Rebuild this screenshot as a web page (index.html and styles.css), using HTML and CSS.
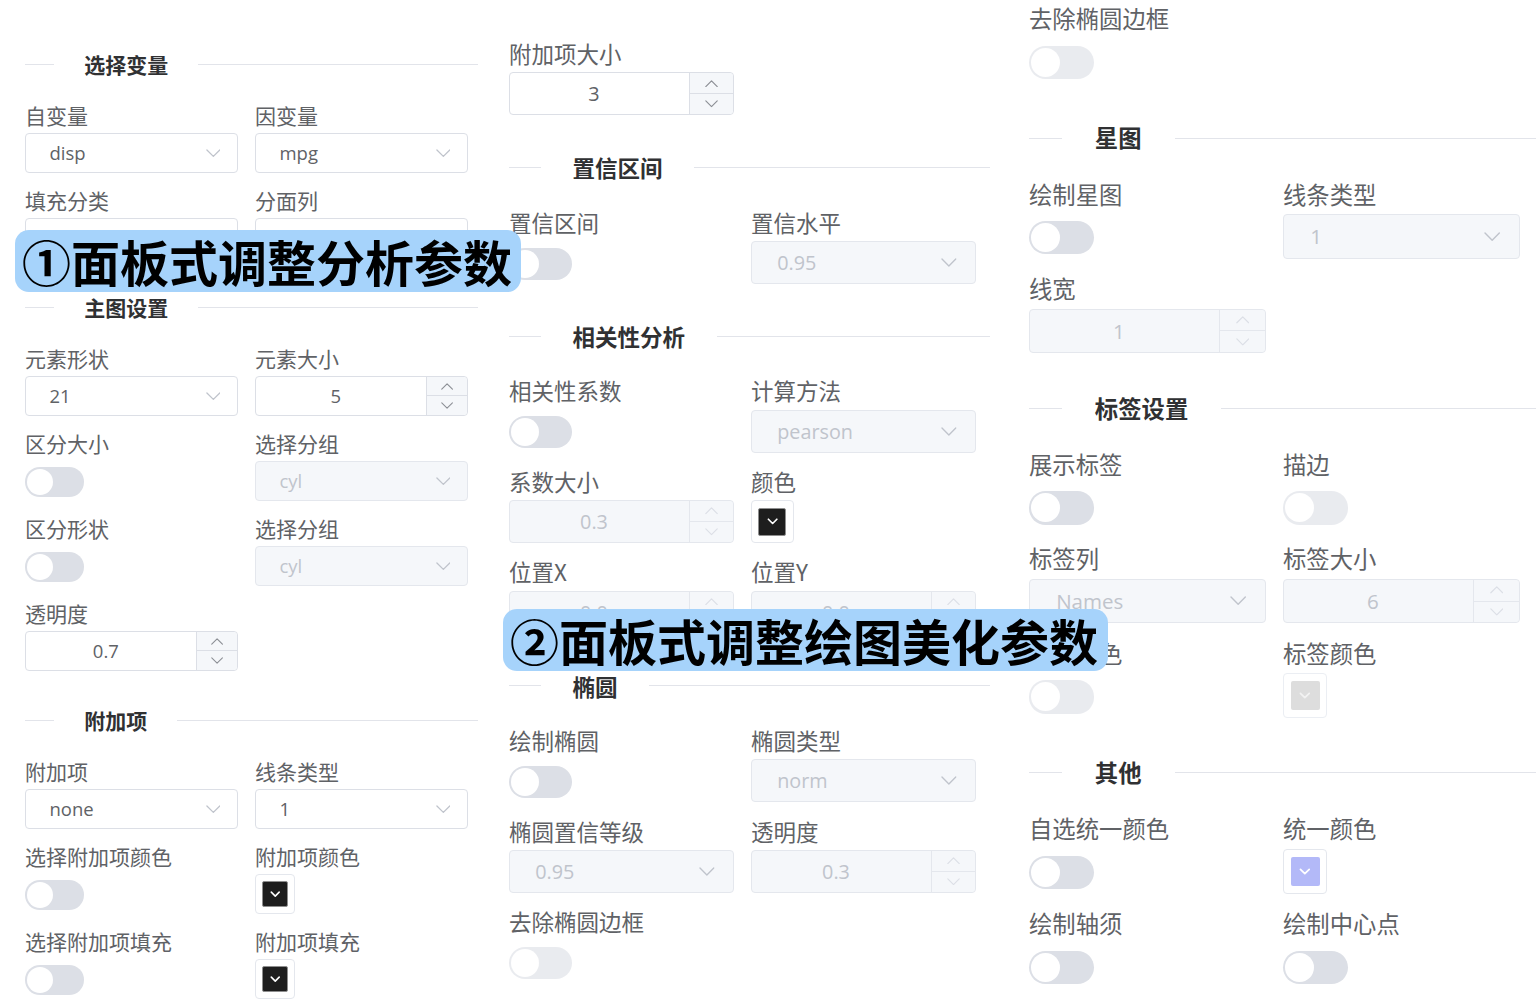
FILE: index.html
```html
<!DOCTYPE html>
<html lang="zh-CN">
<head>
<meta charset="utf-8">
<title>面板</title>
<link rel="stylesheet" href="styles.css">
</head>
<body>
<svg class="defs" width="0" height="0" aria-hidden="true">
  <symbol id="chev" viewBox="0 0 16 9"><path d="M1 1 L8 8 L15 1" fill="none" stroke="currentColor" stroke-width="1.4" stroke-linecap="round" stroke-linejoin="round"/></symbol>
  <symbol id="chevup" viewBox="0 0 16 9"><path d="M1 8 L8 1 L15 8" fill="none" stroke="currentColor" stroke-width="1.5" stroke-linecap="round" stroke-linejoin="round"/></symbol>
  <symbol id="chevb" viewBox="0 0 16 9"><path d="M2 1.5 L8 7.5 L14 1.5" fill="none" stroke="currentColor" stroke-width="2.4" stroke-linecap="round" stroke-linejoin="round"/></symbol>
</svg>

<div class="page">

  <!-- Column 1 -->
  <div class="col c1">
    <div class="divider"><span class="ln l"></span><span class="tt">选择变量</span><span class="ln r"></span></div>
    <div class="row">
      <div class="item"><div class="lbl">自变量</div><div class="ctl"><div class="sel"><span class="val">disp</span><svg class="arr"><use href="#chev"/></svg></div></div></div>
      <div class="item"><div class="lbl">因变量</div><div class="ctl"><div class="sel"><span class="val">mpg</span><svg class="arr"><use href="#chev"/></svg></div></div></div>
    </div>
    <div class="row">
      <div class="item"><div class="lbl">填充分类</div><div class="ctl"><div class="sel"><span class="val"></span><svg class="arr"><use href="#chev"/></svg></div></div></div>
      <div class="item"><div class="lbl">分面列</div><div class="ctl"><div class="sel"><span class="val"></span><svg class="arr"><use href="#chev"/></svg></div></div></div>
    </div>
    <div class="divider"><span class="ln l"></span><span class="tt">主图设置</span><span class="ln r"></span></div>
    <div class="row">
      <div class="item"><div class="lbl">元素形状</div><div class="ctl"><div class="sel"><span class="val">21</span><svg class="arr"><use href="#chev"/></svg></div></div></div>
      <div class="item"><div class="lbl">元素大小</div><div class="ctl"><div class="num"><span class="in val">5</span><span class="sp"><span><svg><use href="#chevup"/></svg></span><span><svg><use href="#chev"/></svg></span></span></div></div></div>
    </div>
    <div class="row">
      <div class="item"><div class="lbl">区分大小</div><div class="ctl"><div class="sw"></div></div></div>
      <div class="item"><div class="lbl">选择分组</div><div class="ctl"><div class="sel dis"><span class="val">cyl</span><svg class="arr"><use href="#chev"/></svg></div></div></div>
    </div>
    <div class="row">
      <div class="item"><div class="lbl">区分形状</div><div class="ctl"><div class="sw"></div></div></div>
      <div class="item"><div class="lbl">选择分组</div><div class="ctl"><div class="sel dis"><span class="val">cyl</span><svg class="arr"><use href="#chev"/></svg></div></div></div>
    </div>
    <div class="row">
      <div class="item"><div class="lbl">透明度</div><div class="ctl"><div class="num"><span class="in val">0.7</span><span class="sp"><span><svg><use href="#chevup"/></svg></span><span><svg><use href="#chev"/></svg></span></span></div></div></div>
    </div>
    <div class="divider"><span class="ln l"></span><span class="tt">附加项</span><span class="ln r"></span></div>
    <div class="row">
      <div class="item"><div class="lbl">附加项</div><div class="ctl"><div class="sel"><span class="val">none</span><svg class="arr"><use href="#chev"/></svg></div></div></div>
      <div class="item"><div class="lbl">线条类型</div><div class="ctl"><div class="sel"><span class="val">1</span><svg class="arr"><use href="#chev"/></svg></div></div></div>
    </div>
    <div class="row">
      <div class="item"><div class="lbl">选择附加项颜色</div><div class="ctl"><div class="sw"></div></div></div>
      <div class="item"><div class="lbl">附加项颜色</div><div class="ctl"><div class="cp"><span class="cc dark"><svg><use href="#chevb"/></svg></span></div></div></div>
    </div>
    <div class="row">
      <div class="item"><div class="lbl">选择附加项填充</div><div class="ctl"><div class="sw"></div></div></div>
      <div class="item"><div class="lbl">附加项填充</div><div class="ctl"><div class="cp"><span class="cc dark"><svg><use href="#chevb"/></svg></span></div></div></div>
    </div>
  </div>

  <!-- Column 2 -->
  <div class="col c2">
    <div class="row">
      <div class="item"><div class="lbl">附加项大小</div><div class="ctl"><div class="num"><span class="in val">3</span><span class="sp"><span><svg><use href="#chevup"/></svg></span><span><svg><use href="#chev"/></svg></span></span></div></div></div>
    </div>
    <div class="divider"><span class="ln l"></span><span class="tt">置信区间</span><span class="ln r"></span></div>
    <div class="row">
      <div class="item"><div class="lbl">置信区间</div><div class="ctl"><div class="sw"></div></div></div>
      <div class="item"><div class="lbl">置信水平</div><div class="ctl"><div class="sel dis"><span class="val">0.95</span><svg class="arr"><use href="#chev"/></svg></div></div></div>
    </div>
    <div class="divider"><span class="ln l"></span><span class="tt">相关性分析</span><span class="ln r"></span></div>
    <div class="row">
      <div class="item"><div class="lbl">相关性系数</div><div class="ctl"><div class="sw"></div></div></div>
      <div class="item"><div class="lbl">计算方法</div><div class="ctl"><div class="sel dis"><span class="val">pearson</span><svg class="arr"><use href="#chev"/></svg></div></div></div>
    </div>
    <div class="row">
      <div class="item"><div class="lbl">系数大小</div><div class="ctl"><div class="num dis"><span class="in val">0.3</span><span class="sp"><span><svg><use href="#chevup"/></svg></span><span><svg><use href="#chev"/></svg></span></span></div></div></div>
      <div class="item"><div class="lbl">颜色</div><div class="ctl"><div class="cp"><span class="cc dark"><svg><use href="#chevb"/></svg></span></div></div></div>
    </div>
    <div class="row">
      <div class="item"><div class="lbl">位置X</div><div class="ctl"><div class="num dis"><span class="in val">0.0</span><span class="sp"><span><svg><use href="#chevup"/></svg></span><span><svg><use href="#chev"/></svg></span></span></div></div></div>
      <div class="item"><div class="lbl">位置Y</div><div class="ctl"><div class="num dis"><span class="in val">0.0</span><span class="sp"><span><svg><use href="#chevup"/></svg></span><span><svg><use href="#chev"/></svg></span></span></div></div></div>
    </div>
    <div class="divider"><span class="ln l"></span><span class="tt">椭圆</span><span class="ln r"></span></div>
    <div class="row">
      <div class="item"><div class="lbl">绘制椭圆</div><div class="ctl"><div class="sw"></div></div></div>
      <div class="item"><div class="lbl">椭圆类型</div><div class="ctl"><div class="sel dis"><span class="val">norm</span><svg class="arr"><use href="#chev"/></svg></div></div></div>
    </div>
    <div class="row">
      <div class="item"><div class="lbl">椭圆置信等级</div><div class="ctl"><div class="sel dis"><span class="val">0.95</span><svg class="arr"><use href="#chev"/></svg></div></div></div>
      <div class="item"><div class="lbl">透明度</div><div class="ctl"><div class="num dis"><span class="in val">0.3</span><span class="sp"><span><svg><use href="#chevup"/></svg></span><span><svg><use href="#chev"/></svg></span></span></div></div></div>
    </div>
    <div class="row">
      <div class="item"><div class="lbl">去除椭圆边框</div><div class="ctl"><div class="sw dim"></div></div></div>
    </div>
  </div>

  <!-- Column 3 -->
  <div class="col c3">
    <div class="row">
      <div class="item"><div class="lbl">去除椭圆边框</div><div class="ctl"><div class="sw dim"></div></div></div>
    </div>
    <div class="divider"><span class="ln l"></span><span class="tt">星图</span><span class="ln r"></span></div>
    <div class="row">
      <div class="item"><div class="lbl">绘制星图</div><div class="ctl"><div class="sw"></div></div></div>
      <div class="item"><div class="lbl">线条类型</div><div class="ctl"><div class="sel dis"><span class="val">1</span><svg class="arr"><use href="#chev"/></svg></div></div></div>
    </div>
    <div class="row">
      <div class="item"><div class="lbl">线宽</div><div class="ctl"><div class="num dis"><span class="in val">1</span><span class="sp"><span><svg><use href="#chevup"/></svg></span><span><svg><use href="#chev"/></svg></span></span></div></div></div>
    </div>
    <div class="divider"><span class="ln l"></span><span class="tt">标签设置</span><span class="ln r"></span></div>
    <div class="row">
      <div class="item"><div class="lbl">展示标签</div><div class="ctl"><div class="sw"></div></div></div>
      <div class="item"><div class="lbl">描边</div><div class="ctl"><div class="sw dim"></div></div></div>
    </div>
    <div class="row">
      <div class="item"><div class="lbl">标签列</div><div class="ctl"><div class="sel dis"><span class="val">Names</span><svg class="arr"><use href="#chev"/></svg></div></div></div>
      <div class="item"><div class="lbl">标签大小</div><div class="ctl"><div class="num dis"><span class="in val">6</span><span class="sp"><span><svg><use href="#chevup"/></svg></span><span><svg><use href="#chev"/></svg></span></span></div></div></div>
    </div>
    <div class="row">
      <div class="item"><div class="lbl">自选颜色</div><div class="ctl"><div class="sw dim"></div></div></div>
      <div class="item"><div class="lbl">标签颜色</div><div class="ctl"><div class="cp dis"><span class="cc grey"><svg><use href="#chevb"/></svg></span></div></div></div>
    </div>
    <div class="divider"><span class="ln l"></span><span class="tt">其他</span><span class="ln r"></span></div>
    <div class="row">
      <div class="item"><div class="lbl">自选统一颜色</div><div class="ctl"><div class="sw"></div></div></div>
      <div class="item"><div class="lbl">统一颜色</div><div class="ctl"><div class="cp"><span class="cc lav"><svg><use href="#chevb"/></svg></span></div></div></div>
    </div>
    <div class="row">
      <div class="item"><div class="lbl">绘制轴须</div><div class="ctl"><div class="sw"></div></div></div>
      <div class="item"><div class="lbl">绘制中心点</div><div class="ctl"><div class="sw"></div></div></div>
    </div>
  </div>

</div>

<div class="callout co1">①面板式调整分析参数</div>
<div class="callout co2">②面板式调整绘图美化参数</div>
</body>
</html>
```

FILE: styles.css
```css
* { box-sizing: border-box; }

html, body {
  margin: 0;
  padding: 0;
  background: #ffffff;
}

body {
  width: 1536px;
  height: 1008px;
  overflow: hidden;
  position: relative;
  font-family: "Noto Sans CJK SC", "Open Sans", sans-serif;
  color: #606266;
}

.defs {
  position: absolute;
  width: 0;
  height: 0;
  overflow: hidden;
}

.page {
  display: flex;
  align-items: flex-start;
  width: 1536px;
}

.col {
  flex: none;
}

.c1 {
  font-size: 21px;
  margin-left: 25px;
  width: 453px;
  padding-top: 28px;
  --sub: 213px;
}

.c2 {
  font-size: 22.5px;
  margin-left: 31px;
  width: 481px;
  padding-top: 38px;
  --sub: 225px;
}

.c3 {
  font-size: 23.35px;
  margin-left: 39px;
  width: 560px;
  padding-top: 3px;
  --sub: 237px;
}

/* section divider */
.divider {
  height: 3.476em;
  display: flex;
  align-items: center;
}

.divider .ln {
  height: 1px;
  background: #e2e4ea;
}

.divider .ln.l { width: 1.4em; }
.divider .ln.r { flex: 1; }

.divider .tt {
  padding: 0 1.42em;
  font-weight: 700;
  color: #303133;
  line-height: 1;
  white-space: nowrap;
}

/* rows & items */
.row {
  display: grid;
  grid-template-columns: var(--sub) var(--sub);
  column-gap: 17px;
}

.item {
  padding-bottom: 0.619em;
}

.c2 .item {
  padding-bottom: 13.35px;
}

.lbl {
  height: 1.524em;
  line-height: 1.36em;
  white-space: nowrap;
  color: #606266;
}

.ctl {
  height: 1.905em;
  display: flex;
  align-items: flex-start;
}

/* select */
.sel, .num {
  width: 100%;
  height: 100%;
  border: 1px solid #dcdfe6;
  border-radius: 4px;
  background: #ffffff;
  display: flex;
  align-items: center;
}

.sel {
  padding: 0 0.8em 0 1.12em;
  justify-content: space-between;
}

.val {
  font-family: "Open Sans", "Noto Sans CJK SC", sans-serif;
  font-size: 0.88em;
  color: #606266;
  white-space: nowrap;
}

.sel .arr {
  width: 0.7em;
  height: 0.4em;
  color: #c0c4cc;
  flex: none;
}

.sel.dis, .num.dis {
  background: #f5f7fa;
  border-color: #e4e7ed;
}

.dis .val { color: #c0c4cc; }

/* number input */
.num .in {
  flex: 1;
  text-align: center;
  padding-right: 0.55em;
}

.num .sp {
  width: 1.96em;
  height: 100%;
  flex: none;
  border-left: 1px solid #dcdfe6;
  background: #f5f7fa;
  border-radius: 0 4px 4px 0;
  display: flex;
  flex-direction: column;
}

.num .sp span {
  flex: 1;
  display: flex;
  align-items: center;
  justify-content: center;
}

.num .sp span + span {
  border-top: 1px solid #dcdfe6;
}

.num .sp svg {
  width: 0.58em;
  height: 0.33em;
  color: #8c8f95;
}

.num.dis .sp { border-color: #e4e7ed; }
.num.dis .sp span + span { border-color: #e4e7ed; }
.num.dis .sp svg { color: #dcdfe6; }

/* switch */
.sw {
  margin-top: 0.3em;
  width: 2.8em;
  height: 1.42em;
  border-radius: 0.71em;
  background: #dcdfe6;
  display: flex;
  align-items: center;
  padding: 0 0.09em;
}

.sw::before {
  content: "";
  width: 1.24em;
  height: 1.24em;
  border-radius: 50%;
  background: #ffffff;
}

.sw.dim { opacity: 0.6; }

/* color picker */
.cp {
  width: 1.905em;
  height: 1.905em;
  border: 1px solid #e4e7ed;
  border-radius: 4px;
  background: #fff;
  display: flex;
  align-items: center;
  justify-content: center;
}

.cp .cc {
  width: 1.25em;
  height: 1.25em;
  border-radius: 2px;
  display: flex;
  align-items: center;
  justify-content: center;
}

.cp .cc svg {
  width: 0.5em;
  height: 0.3em;
  color: #ffffff;
}

.cc.dark { background: #1e1e1e; border: 1px solid #8e8e8e; }
.cc.grey { background: #dddddd; }
.cc.grey svg { color: #f2f2f2; }
.cc.lav { background: #b3b9f8; }
.cp.dis { border-color: #ebeef3; }

/* callouts */
.callout {
  position: absolute;
  height: 62px;
  line-height: 62px;
  padding-left: 7px;
  background: #a6d3fb;
  border-radius: 14px;
  color: #000000;
  font-family: "Noto Sans CJK SC", sans-serif;
  font-weight: 700;
  font-size: 49px;
  white-space: nowrap;
}

.co1 { left: 15px; top: 230px; width: 506px; }
.co2 { left: 503px; top: 609px; width: 605px; }
```
